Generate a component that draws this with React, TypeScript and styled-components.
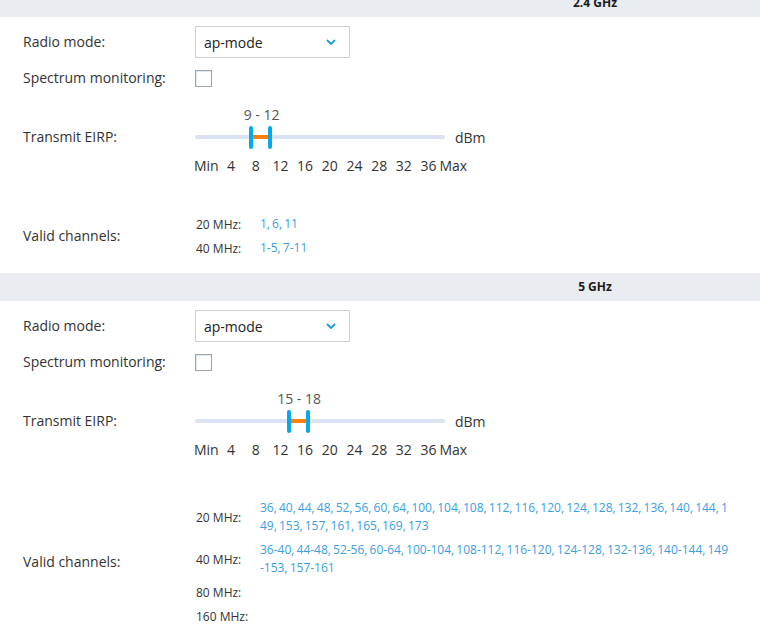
import React from "react";
import styled, { createGlobalStyle } from "styled-components";

const GlobalStyle = createGlobalStyle`
  html, body {
    margin: 0;
    padding: 0;
    background: #ffffff;
    overflow: hidden;
  }
  body {
    font-family: "Open Sans", "Noto Sans", Arial, sans-serif;
    color: #333;
  }
`;

// sidan är scrollad en bit, så första rubriken syns bara delvis
const Page = styled.div`
  margin-top: -11px;
  width: 760px;
`;

const SectionHeader = styled.div`
  display: grid;
  grid-template-columns: 430px 1fr;
  height: 28px;
  background: #e9ecf1;
`;

const SectionTitle = styled.div`
  grid-column: 2;
  text-align: center;
  line-height: 28px;
  font-size: 12px;
  font-weight: 700;
  color: #1c1c1c;
`;

const SectionBody = styled.div`
  display: flex;
  flex-direction: column;
  padding: 9px 0 13px;
`;

const Row = styled.div<{ $top?: number; $height?: number }>`
  display: grid;
  grid-template-columns: 195px 1fr;
  align-items: center;
  margin-top: ${(p) => p.$top ?? 0}px;
  min-height: ${(p) => p.$height ?? 0}px;
`;

const Label = styled.div<{ $padTop?: number }>`
  padding-left: 23px;
  font-size: 14px;
  color: #333;
  padding-top: ${(p) => p.$padTop ?? 0}px;
  align-self: ${(p) => (p.$padTop ? "start" : "center")};
  line-height: 24px;
`;

const SelectBox = styled.div`
  box-sizing: border-box;
  width: 155px;
  height: 32px;
  border: 1px solid #cfcfcf;
  display: flex;
  align-items: center;
  justify-content: space-between;
  padding: 0 13px 0 8px;
  font-size: 14px;
  color: #222;
`;

const Checkbox = styled.div`
  box-sizing: border-box;
  width: 17px;
  height: 17px;
  border: 1px solid #a3a3a3;
  box-shadow: inset 1px 1px 0 #dbe9f7;
  background: #fff;
`;

const SliderColumn = styled.div`
  display: flex;
  flex-direction: column;
`;

const ValueLine = styled.div`
  position: relative;
  width: 250px;
  height: 20px;
`;

const ValueText = styled.span`
  position: absolute;
  top: 0;
  transform: translateX(-50%);
  white-space: nowrap;
  font-size: 14px;
  line-height: 20px;
  color: #555;
`;

const TrackRow = styled.div`
  display: flex;
  align-items: center;
  gap: 10px;
`;

const Track = styled.div`
  position: relative;
  width: 250px;
  height: 24px;
`;

const Rail = styled.div`
  position: absolute;
  left: 0;
  right: 0;
  top: 10px;
  height: 4px;
  border-radius: 2px;
  background: #dbe2f1;
`;

const Fill = styled.div`
  position: absolute;
  top: 10px;
  height: 4px;
  background: #ff8000;
`;

const Handle = styled.div`
  position: absolute;
  top: 1px;
  width: 4px;
  height: 23px;
  margin-left: -2px;
  border-radius: 2px;
  background: #04a8eb;
`;

const Unit = styled.span`
  font-size: 14px;
  color: #333;
`;

const Ticks = styled.div`
  display: grid;
  grid-template-columns: repeat(11, 24.7px);
  margin: 7px 0 0 -1px;
  font-size: 14px;
  line-height: 20px;
  color: #333;
`;

const Tick = styled.span`
  white-space: nowrap;
  display: flex;
  justify-content: center;
`;

const ChannelTable = styled.div`
  display: flex;
  flex-direction: column;
`;

const ChannelRow = styled.div`
  display: grid;
  grid-template-columns: 65px 470.5px;
  align-items: center;
  padding: 3px 0;
`;

const BandLabel = styled.span`
  padding-left: 1px;
  font-size: 12px;
  color: #333;
  white-space: nowrap;
`;

const ChannelList = styled.div`
  font-size: 12px;
  line-height: 18px;
  color: #3a9ee4;
  word-break: break-all;
`;

// varje kanal med sitt komma; lite extra luft efter kommat som i originalet
const Channel = styled.span<{ $last?: boolean }>`
  margin-right: ${(p) => (p.$last ? 0 : 2.1)}px;
`;

const Chevron = () => (
  <svg width="10" height="6" viewBox="0 0 10 6">
    <path d="M1 1l4 4 4-4" fill="none" stroke="#1e9ad6" strokeWidth="1.8" />
  </svg>
);

const MAX = 40;
const TRACK = 250;
const pos = (v: number) => (v / MAX) * TRACK;

const RangeSlider: React.FC<{ low: number; high: number }> = ({ low, high }) => (
  <SliderColumn>
    <ValueLine>
      <ValueText style={{ left: (pos(low) + pos(high)) / 2 + 1 }}>
        {low} - {high}
      </ValueText>
    </ValueLine>
    <TrackRow>
      <Track>
        <Rail />
        <Fill style={{ left: pos(low), width: pos(high) - pos(low) }} />
        <Handle style={{ left: pos(low) }} />
        <Handle style={{ left: pos(high) }} />
      </Track>
      <Unit>dBm</Unit>
    </TrackRow>
    <Ticks>
      {["Min", "4", "8", "12", "16", "20", "24", "28", "32", "36", "Max"].map((t) => (
        <Tick key={t}>{t}</Tick>
      ))}
    </Ticks>
  </SliderColumn>
);

const ChannelValues: React.FC<{ list: string }> = ({ list }) => {
  if (!list) return <ChannelList>{"\u00a0"}</ChannelList>;
  const parts = list.split(",");
  return (
    <ChannelList>
      {parts.map((p, i) => {
        const last = i === parts.length - 1;
        return (
          <Channel key={i} $last={last}>
            {last ? p : p + ","}
          </Channel>
        );
      })}
    </ChannelList>
  );
};

interface Band {
  title: string;
  low: number;
  high: number;
  channels: [string, string][];
}

const bands: Band[] = [
  {
    title: "2.4 GHz",
    low: 9,
    high: 12,
    channels: [
      ["20 MHz:", "1,6,11"],
      ["40 MHz:", "1-5,7-11"],
    ],
  },
  {
    title: "5 GHz",
    low: 15,
    high: 18,
    channels: [
      [
        "20 MHz:",
        "36,40,44,48,52,56,60,64,100,104,108,112,116,120,124,128,132,136,140,144,149,153,157,161,165,169,173",
      ],
      [
        "40 MHz:",
        "36-40,44-48,52-56,60-64,100-104,108-112,116-120,124-128,132-136,140-144,149-153,157-161",
      ],
      ["80 MHz:", ""],
      ["160 MHz:", ""],
    ],
  },
];

const RadioSection: React.FC<{ band: Band }> = ({ band }) => (
  <section>
    <SectionHeader>
      <SectionTitle>{band.title}</SectionTitle>
    </SectionHeader>
    <SectionBody>
      <Row $height={32}>
        <Label>Radio mode:</Label>
        <SelectBox>
          <span>ap-mode</span>
          <Chevron />
        </SelectBox>
      </Row>
      <Row $top={4} $height={32}>
        <Label>Spectrum monitoring:</Label>
        <Checkbox />
      </Row>
      <Row $top={11}>
        <Label $padTop={20}>Transmit EIRP:</Label>
        <RangeSlider low={band.low} high={band.high} />
      </Row>
      <Row $top={36}>
        <Label>Valid channels:</Label>
        <ChannelTable>
          {band.channels.map(([w, list]) => (
            <ChannelRow key={w}>
              <BandLabel>{w}</BandLabel>
              <ChannelValues list={list} />
            </ChannelRow>
          ))}
        </ChannelTable>
      </Row>
    </SectionBody>
  </section>
);

export default function App() {
  return (
    <>
      <GlobalStyle />
      <Page>
        {bands.map((b) => (
          <RadioSection key={b.title} band={b} />
        ))}
      </Page>
    </>
  );
}
